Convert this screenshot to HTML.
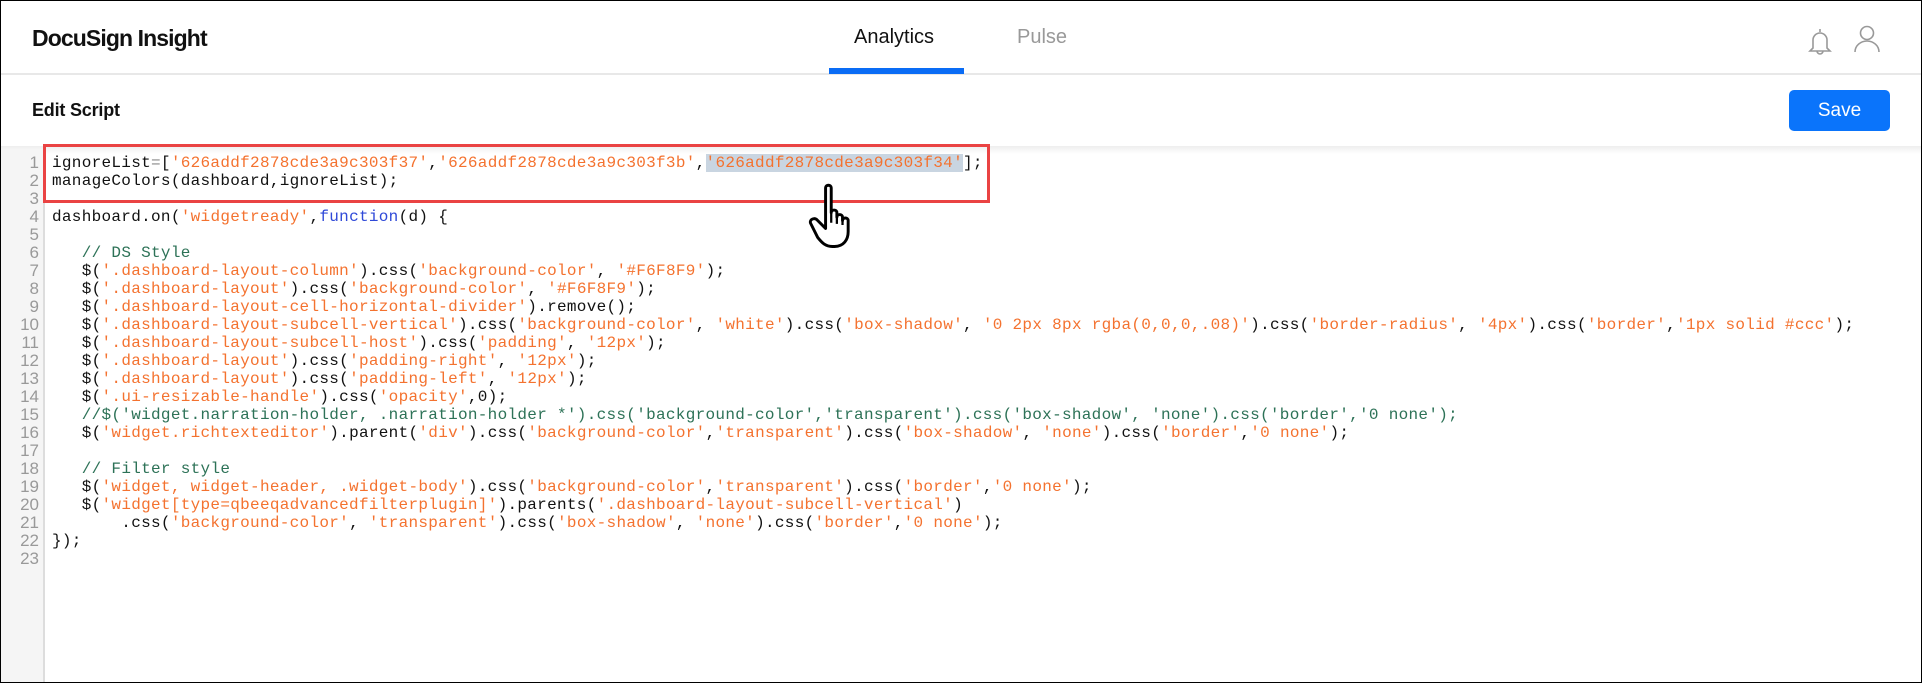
<!DOCTYPE html>
<html><head><meta charset="utf-8"><style>
*{margin:0;padding:0;box-sizing:border-box}
html,body{width:1922px;height:683px;overflow:hidden;background:#fff}
body{position:relative;border:1px solid #000;font-family:"Liberation Sans",Arial,sans-serif}
.logo{position:absolute;left:31px;top:24px;font-size:23px;font-weight:bold;letter-spacing:-0.9px;color:#111}
.tab{position:absolute;top:25px;font-size:20px}
.hdrline{position:absolute;left:0;right:0;top:72px;height:2px;background:#e8e8e8}
.under{position:absolute;left:828px;width:135px;top:67px;height:6px;background:#0a6cf5}
.title{position:absolute;left:31px;top:99px;font-size:18px;font-weight:bold;color:#111;letter-spacing:-0.2px}
.save{position:absolute;left:1788px;top:89px;width:101px;height:41px;background:#0a74fb;border-radius:5px;color:#fff;font-size:19px;text-align:center;line-height:41px}
.shadow{position:absolute;left:0;right:0;top:145px;height:8px;background:linear-gradient(#eee,#fff)}
.gutter{position:absolute;left:0;top:148px;width:44px;bottom:0;background:#f5f5f5;border-right:2px solid #ddd}
.nums{position:absolute;left:0;width:38px;top:153px;text-align:right;font-family:"Liberation Sans",sans-serif;font-size:17px;line-height:18px;color:#999}
.code{position:absolute;left:51px;top:153px;font-family:"Liberation Mono",monospace;font-size:16px;line-height:18px;color:#111;white-space:pre;letter-spacing:0.3px}
.s{color:#f4722f}.c{color:#2d7257}.k{color:#2f49d8}.o{color:#888}
.sel{background:#c9d5e1}
.red{position:absolute;left:42px;top:143px;width:947px;height:59px;border:3px solid #ea4343}
</style></head><body>
<div class="logo">DocuSign Insight</div>
<div class="tab" style="left:853px;color:#111">Analytics</div>
<div class="tab" style="left:1016px;color:#999">Pulse</div>
<svg style="position:absolute;left:1804px;top:26px" width="30" height="30" viewBox="0 0 30 30" fill="none" stroke="#999" stroke-width="1.6"><path d="M15 2v3M8 21V13a7 7 0 0 1 14 0v8l3 3H5l3-3z"/><path d="M12 24a3 3 0 0 0 6 0"/></svg>
<svg style="position:absolute;left:1851px;top:24px" width="30" height="28" viewBox="0 0 30 28" fill="none" stroke="#999" stroke-width="1.6"><circle cx="15" cy="8" r="6.5"/><path d="M3 27a12 11 0 0 1 24 0"/></svg>
<div class="hdrline"></div>
<div class="under"></div>
<div class="title">Edit Script</div>
<div class="save">Save</div>
<div class="shadow"></div>
<div class="gutter"></div>
<div class="nums">1<br>2<br>3<br>4<br>5<br>6<br>7<br>8<br>9<br>10<br>11<br>12<br>13<br>14<br>15<br>16<br>17<br>18<br>19<br>20<br>21<br>22<br>23</div>
<div class="code">ignoreList<span class="o">=</span>[<span class="s">'626addf2878cde3a9c303f37'</span>,<span class="s">'626addf2878cde3a9c303f3b'</span>,<span class="s sel">'626addf2878cde3a9c303f34'</span>];
manageColors(dashboard,ignoreList);

dashboard.on(<span class="s">'widgetready'</span>,<span class="k">function</span>(d) {

   <span class="c">// DS Style</span>
   $(<span class="s">'.dashboard-layout-column'</span>).css(<span class="s">'background-color'</span>, <span class="s">'#F6F8F9'</span>);
   $(<span class="s">'.dashboard-layout'</span>).css(<span class="s">'background-color'</span>, <span class="s">'#F6F8F9'</span>);
   $(<span class="s">'.dashboard-layout-cell-horizontal-divider'</span>).remove();
   $(<span class="s">'.dashboard-layout-subcell-vertical'</span>).css(<span class="s">'background-color'</span>, <span class="s">'white'</span>).css(<span class="s">'box-shadow'</span>, <span class="s">'0 2px 8px rgba(0,0,0,.08)'</span>).css(<span class="s">'border-radius'</span>, <span class="s">'4px'</span>).css(<span class="s">'border'</span>,<span class="s">'1px solid #ccc'</span>);
   $(<span class="s">'.dashboard-layout-subcell-host'</span>).css(<span class="s">'padding'</span>, <span class="s">'12px'</span>);
   $(<span class="s">'.dashboard-layout'</span>).css(<span class="s">'padding-right'</span>, <span class="s">'12px'</span>);
   $(<span class="s">'.dashboard-layout'</span>).css(<span class="s">'padding-left'</span>, <span class="s">'12px'</span>);
   $(<span class="s">'.ui-resizable-handle'</span>).css(<span class="s">'opacity'</span>,0);
   <span class="c">//$('widget.narration-holder, .narration-holder *').css('background-color','transparent').css('box-shadow', 'none').css('border','0 none');</span>
   $(<span class="s">'widget.richtexteditor'</span>).parent(<span class="s">'div'</span>).css(<span class="s">'background-color'</span>,<span class="s">'transparent'</span>).css(<span class="s">'box-shadow'</span>, <span class="s">'none'</span>).css(<span class="s">'border'</span>,<span class="s">'0 none'</span>);

   <span class="c">// Filter style</span>
   $(<span class="s">'widget, widget-header, .widget-body'</span>).css(<span class="s">'background-color'</span>,<span class="s">'transparent'</span>).css(<span class="s">'border'</span>,<span class="s">'0 none'</span>);
   $(<span class="s">'widget[type=qbeeqadvancedfilterplugin]'</span>).parents(<span class="s">'.dashboard-layout-subcell-vertical'</span>)
       .css(<span class="s">'background-color'</span>, <span class="s">'transparent'</span>).css(<span class="s">'box-shadow'</span>, <span class="s">'none'</span>).css(<span class="s">'border'</span>,<span class="s">'0 none'</span>);
});
</div>
<div class="red"></div>
<svg style="position:absolute;left:806px;top:180px" width="62" height="70" viewBox="0 0 54 62"><path d="M16 6c0-3 5-3 5 0v22c0-3 5-3 5 0v4c0-3 5-3 5 0v3c0-3 5-3 5 0v10c0 7-4 13-12 13h-2c-6 0-9-3-13-8L3 38c-2-3 2-6 5-4l8 8z" fill="#fff" stroke="#000" stroke-width="2.6" stroke-linejoin="round"/><path d="M21 28v9M26 32v6M31 35v4" stroke="#000" stroke-width="2"/></svg>
</body></html>
